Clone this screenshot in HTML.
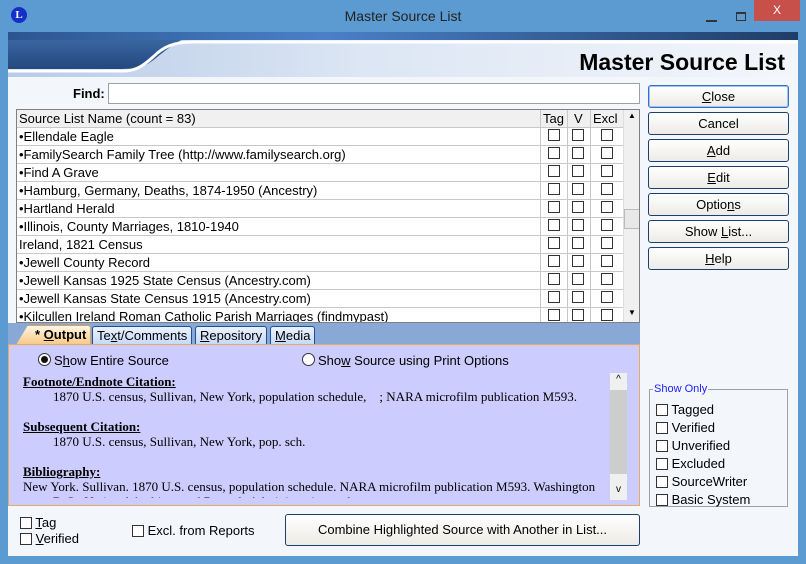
<!DOCTYPE html>
<html><head><style>
*{box-sizing:border-box;margin:0;padding:0}
body{width:806px;height:564px;overflow:hidden;background:#5c9bd1;font-family:"Liberation Sans",sans-serif;font-size:12.5px;color:#000;position:relative}
.abs{position:absolute}
.title{left:0;top:0;width:806px;height:32px;text-align:center;line-height:32px;font-size:14px;color:#222}
.client{left:8px;top:32px;width:790px;height:524px;background:#f3f6fb}
.btn{position:absolute;left:648px;width:141px;height:23px;border:1px solid #1c3f6e;border-radius:3px;background:linear-gradient(#fff,#ecebe6);text-align:center;line-height:21px;font-size:13px}
.list{left:16px;top:109px;width:624px;height:214px;border:1px solid #808080;background:#fff;overflow:hidden}
.row{position:absolute;left:0;width:606px;height:18px;border-bottom:1px solid #c8c8c8;line-height:17px;padding-left:2px;font-size:13px;white-space:nowrap}
.cb{position:absolute;width:12px;height:12px;border:1px solid #333;background:#fff}
.vl{position:absolute;top:0;width:1px;height:214px;background:#c8c8c8}
.tab{position:absolute;top:326px;height:19px;border:1px solid #1f4f9a;border-bottom:none;border-radius:3px 3px 0 0;background:linear-gradient(#eaf2ff,#c4d9f5);font-size:13px;line-height:17px;padding:0 4px}
u{text-decoration:underline}
.serif{font-family:"Liberation Serif",serif;font-size:13px}
.so label{display:block;height:18px}
</style></head><body>
<div class="abs title">Master Source List</div>
<div class="abs" style="left:11px;top:7px;width:16px;height:16px;border-radius:50%;background:#1530c8;color:#fff;font:bold 11px 'Liberation Serif',serif;text-align:center;line-height:16px">L</div>
<div class="abs" style="left:706px;top:20px;width:11px;height:2px;background:#333"></div>
<div class="abs" style="left:736px;top:12px;width:10px;height:9px;border:1px solid #333;border-top-width:2px"></div>
<div class="abs" style="left:754px;top:0;width:46px;height:21px;background:#c7504b;color:#fff;text-align:center;line-height:21px;font-size:12px">X</div>
<div class="abs client"></div>
<svg class="abs" style="left:8px;top:32px" width="790" height="45">
<defs><linearGradient id="g" x1="0" x2="1"><stop offset="0" stop-color="#2b5590"/><stop offset=".4" stop-color="#4a80c8"/><stop offset="1" stop-color="#1f3d66"/></linearGradient>
<linearGradient id="h" x1="0" x2="1"><stop offset="0" stop-color="#b8cbe8"/><stop offset=".45" stop-color="#dce6f4"/><stop offset="1" stop-color="#f3f6fb"/></linearGradient>
<linearGradient id="k" x1="0" y1="0" x2="0" y2="1"><stop offset="0" stop-color="#3f6eaa"/><stop offset="1" stop-color="#23497e"/></linearGradient></defs>
<rect width="790" height="45" fill="url(#h)"/>
<path d="M0 0H190C170 8 158 18 148 26 138 34 132 37 112 37H0Z" fill="url(#k)"/>
<rect width="790" height="8" fill="url(#g)"/>
<path d="M0 39H115C128 39 135 34 145 25 155 15 165 10 185 10H790" stroke="#fff" stroke-width="3" fill="none"/>
</svg>
<div class="abs" style="right:21px;top:49px;font-size:23px;font-weight:bold">Master Source List</div>
<div class="abs" style="left:73px;top:86px;font-weight:bold;font-size:13px">Find:</div>
<div class="abs" style="left:108px;top:83px;width:532px;height:21px;border:1px solid #a0a0a0;background:#fff"></div>
<div class="btn" style="top:85px;border-color:#3a6fc0;box-shadow:inset 0 0 0 1px #9ec4ff"><u>C</u>lose</div>
<div class="btn" style="top:112px">Cancel</div>
<div class="btn" style="top:139px"><u>A</u>dd</div>
<div class="btn" style="top:166px"><u>E</u>dit</div>
<div class="btn" style="top:193px">Optio<u>n</u>s</div>
<div class="btn" style="top:220px">Show <u>L</u>ist...</div>
<div class="btn" style="top:247px"><u>H</u>elp</div>
<div class="abs list">
<div class="row" style="top:0;background:#f0f0f0;width:606px">Source List Name (count = 83)</div>
<div class="abs" style="left:526px;top:0;line-height:17px;font-size:13px">Tag</div>
<div class="abs" style="left:557px;top:0;line-height:17px;font-size:13px">V</div>
<div class="abs" style="left:576px;top:0;line-height:17px;font-size:13px">Excl</div>
<div class="row" style="top:18px">•Ellendale Eagle</div>
<div class="row" style="top:36px">•FamilySearch Family Tree (http://www.familysearch.org)</div>
<div class="row" style="top:54px">•Find A Grave</div>
<div class="row" style="top:72px">•Hamburg, Germany, Deaths, 1874-1950 (Ancestry)</div>
<div class="row" style="top:90px">•Hartland Herald</div>
<div class="row" style="top:108px">•Illinois, County Marriages, 1810-1940</div>
<div class="row" style="top:126px">Ireland, 1821 Census</div>
<div class="row" style="top:144px">•Jewell County Record</div>
<div class="row" style="top:162px">•Jewell Kansas 1925 State Census (Ancestry.com)</div>
<div class="row" style="top:180px">•Jewell Kansas State Census 1915 (Ancestry.com)</div>
<div class="row" style="top:198px">•Kilcullen Ireland Roman Catholic Parish Marriages (findmypast)</div>
<div class="vl" style="left:523px"></div><div class="vl" style="left:550px"></div><div class="vl" style="left:573px"></div>
<div class="abs" style="left:606px;top:0;width:17px;height:214px;background:#f0f0f0;border-left:1px solid #ddd"></div>
<div class="abs" style="left:607px;top:1px;width:16px;font-size:8px;text-align:center">▲</div>
<div class="abs" style="left:607px;top:99px;width:16px;height:20px;background:#e8e8e8;border:1px solid #bbb"></div>
<div class="abs" style="left:607px;top:198px;width:16px;font-size:8px;text-align:center">▼</div>
</div>
<div id="cbs"></div>
<div class="abs" style="left:8px;top:323px;width:632px;height:22px;background:#88a8d6"></div>
<div class="tab" style="left:16px;top:325px;height:20px;background:linear-gradient(#fff5e4,#f8c880);border-color:#e0a050;font-weight:bold;padding:0 4px 0 18px;clip-path:polygon(12px 0,100% 0,100% 100%,0 100%)">* <u>O</u>utput</div>
<div class="tab" style="left:92px">Te<u>x</u>t/Comments</div>
<div class="tab" style="left:195px"><u>R</u>epository</div>
<div class="tab" style="left:270px"><u>M</u>edia</div>
<div class="abs" style="left:8px;top:344px;width:632px;height:162px;background:#ccccfe;border:1px solid #e8a860"></div>
<div class="abs" style="left:38px;top:353px;width:13px;height:13px;border-radius:50%;border:1px solid #333;background:#fff"><div style="margin:2px;width:7px;height:7px;border-radius:50%;background:#111"></div></div>
<div class="abs" style="left:54px;top:353px;font-size:13px">S<u>h</u>ow Entire Source</div>
<div class="abs" style="left:302px;top:353px;width:13px;height:13px;border-radius:50%;border:1px solid #333;background:#fff"></div>
<div class="abs" style="left:318px;top:353px;font-size:13px">Sho<u>w</u> Source using Print Options</div>
<div class="abs serif" style="left:23px;top:374px;width:580px;height:124px;overflow:hidden;line-height:15px">
<b><u>Footnote/Endnote Citation:</u></b><br><span style="padding-left:30px">1870 U.S. census, Sullivan, New York, population schedule, &nbsp;&nbsp;&nbsp;; NARA microfilm publication M593.</span><br><br>
<b><u>Subsequent Citation:</u></b><br><span style="padding-left:30px">1870 U.S. census, Sullivan, New York, pop. sch.</span><br><br>
<b><u>Bibliography:</u></b><br>New York. Sullivan. 1870 U.S. census, population schedule. NARA microfilm publication M593. Washington<br><span style="padding-left:30px">D.C.: National Archives and Records Administration, n.d.</span></div>
<div class="abs" style="left:610px;top:373px;width:17px;height:127px;background:#f0f0f0"><div style="margin-top:17px;height:84px;background:#cdcdcd"></div></div>
<div class="abs" style="left:610px;top:374px;width:17px;text-align:center;font-size:10px">^</div>
<div class="abs" style="left:610px;top:484px;width:17px;text-align:center;font-size:10px">v</div>
<div class="abs" style="left:20px;top:515px;font-size:13px" ><span class="cb" style="position:relative;display:inline-block;vertical-align:-2px"></span> <u>T</u>ag</div>
<div class="abs" style="left:20px;top:531px;font-size:13px"><span class="cb" style="position:relative;display:inline-block;vertical-align:-2px"></span> <u>V</u>erified</div>
<div class="abs" style="left:132px;top:523px;font-size:13px"><span class="cb" style="position:relative;display:inline-block;vertical-align:-2px"></span> Excl. from Reports</div>
<div class="abs" style="left:285px;top:514px;width:355px;height:32px;border:1px solid #1c3f6e;border-radius:3px;background:linear-gradient(#fff,#ecebe6);text-align:center;line-height:30px;font-size:13px">Combine Highlighted Source with Another in List...</div>
<div class="abs" style="left:649px;top:389px;width:139px;height:118px;border:1px solid #a0a0a0"></div>
<div class="abs" style="left:653px;top:383px;background:#f3f6fb;color:#2020ff;font-size:11px;padding:0 1px">Show Only</div>
<div class="abs so" style="left:656px;top:401px;font-size:13px;line-height:18px">
<label><span class="cb" style="position:relative;display:inline-block;vertical-align:-2px"></span> Tagged</label>
<label><span class="cb" style="position:relative;display:inline-block;vertical-align:-2px"></span> Verified</label>
<label><span class="cb" style="position:relative;display:inline-block;vertical-align:-2px"></span> Unverified</label>
<label><span class="cb" style="position:relative;display:inline-block;vertical-align:-2px"></span> Excluded</label>
<label><span class="cb" style="position:relative;display:inline-block;vertical-align:-2px"></span> SourceWriter</label>
<label><span class="cb" style="position:relative;display:inline-block;vertical-align:-2px"></span> Basic System</label>
</div>
<script>
var h='';for(var i=0;i<11;i++){var t=128+i*18+1;[548,572,601].forEach(function(x){h+='<div class="cb" style="left:'+x+'px;top:'+t+'px"></div>'});}
document.getElementById('cbs').innerHTML=h;
</script>
</body></html>
